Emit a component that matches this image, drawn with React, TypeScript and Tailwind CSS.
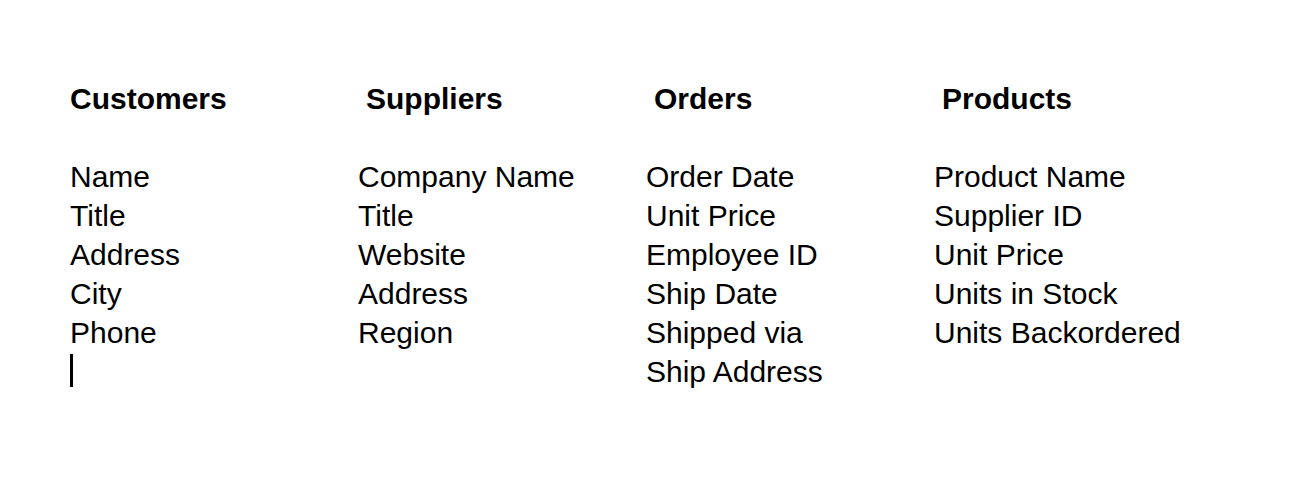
const columns = [
  { title: 'Customers', indent: false, fields: ['Name', 'Title', 'Address', 'City', 'Phone'] },
  { title: 'Suppliers', indent: true, fields: ['Company Name', 'Title', 'Website', 'Address', 'Region'] },
  {
    title: 'Orders',
    indent: true,
    fields: ['Order Date', 'Unit Price', 'Employee ID', 'Ship Date', 'Shipped via', 'Ship Address'],
  },
  {
    title: 'Products',
    indent: true,
    fields: ['Product Name', 'Supplier ID', 'Unit Price', 'Units in Stock', 'Units Backordered'],
  },
];

export default function App() {
  return (
    <div className="w-[1314px] h-[484px] bg-white text-black font-['Liberation_Sans',Arial,sans-serif] text-[30px] leading-[39px] pt-[79px] pl-[70px]">
      <div className="grid grid-cols-[288px_288px_288px_288px]">
        {columns.map((col, i) => (
          <div key={col.title} className="flex flex-col">
            <div className={`font-bold ${col.indent ? 'pl-[8px]' : ''}`}>{col.title}</div>
            <div className="h-[39px]" />
            {col.fields.map((f) => (
              <div key={f} className="whitespace-nowrap">
                {f}
              </div>
            ))}
            {/* text caret */}
            {i === 0 && (
              <div className="h-[39px] flex items-start pt-[2px]">
                <span className="block w-[3px] h-[33px] bg-black" />
              </div>
            )}
          </div>
        ))}
      </div>
    </div>
  );
}
